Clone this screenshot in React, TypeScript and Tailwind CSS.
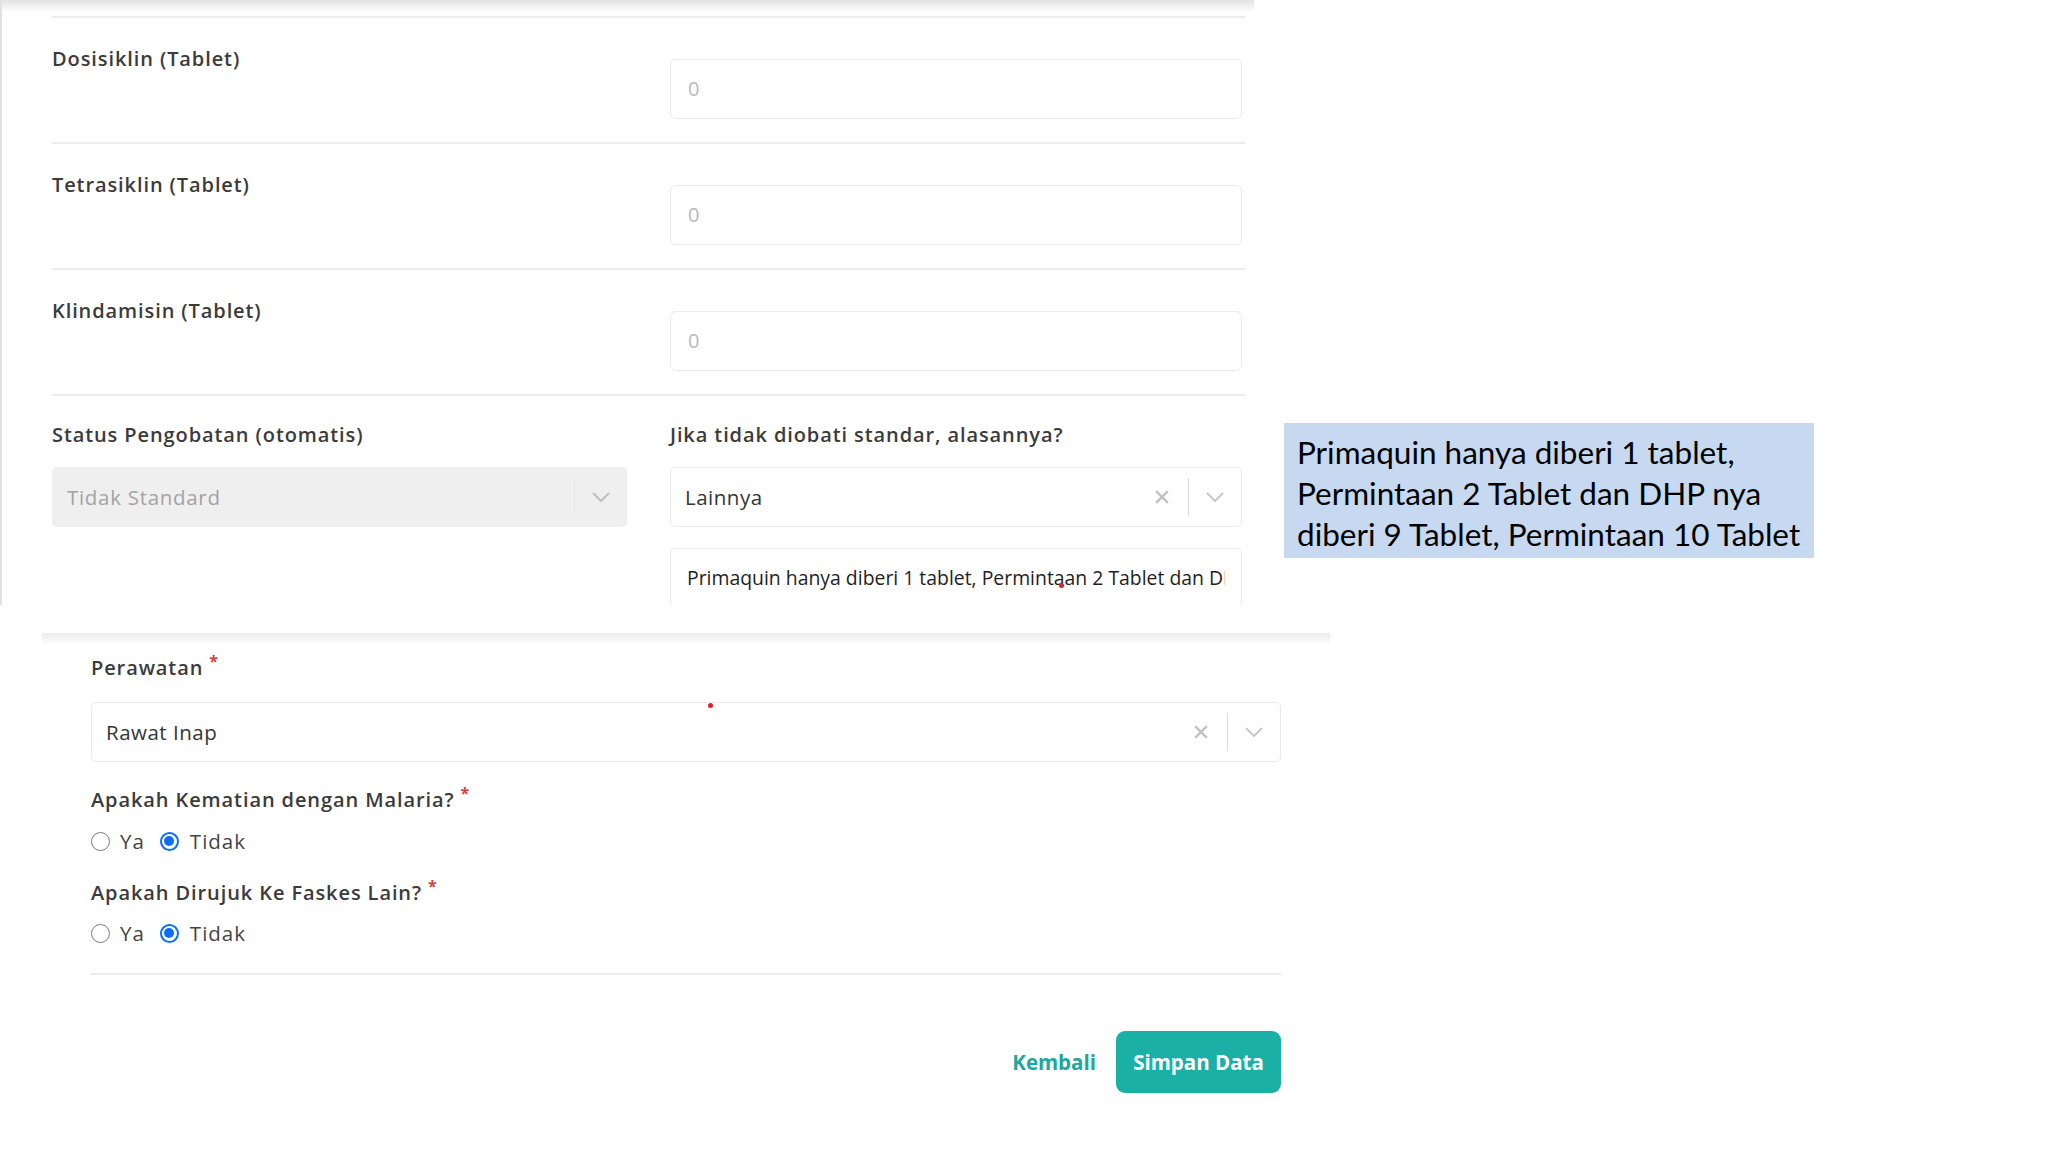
import React from "react";

const sans = "font-['Open_Sans',sans-serif]";

function Chevron({ className = "" }: { className?: string }) {
  return (
    <svg viewBox="0 0 20 20" className={className} fill="none" stroke="currentColor" strokeWidth={1.8} strokeLinecap="round" strokeLinejoin="round">
      <path d="M2.5 6.5l7.5 7.5 7.5-7.5" />
    </svg>
  );
}

function Cross({ className = "" }: { className?: string }) {
  return (
    <svg viewBox="0 0 20 20" className={className} fill="none" stroke="currentColor" strokeWidth={3} strokeLinecap="round">
      <path d="M3.5 3.5l13 13M16.5 3.5l-13 13" />
    </svg>
  );
}

function NumberInput() {
  return (
    <div className="mt-[14px] flex h-[60px] items-center rounded-[6px] border border-[#ebebeb] bg-white pl-[17px] text-[20px] text-[#b9b9b9]">
      0
    </div>
  );
}

function ClearableSelect({ value }: { value: string }) {
  return (
    <div className="flex h-[60px] items-center rounded-[5px] border border-[#ebebeb] bg-white">
      <span className="flex-1 pl-[14px] text-[20.5px] tracking-[0.5px] text-[#353535]">{value}</span>
      <span className="flex w-[52px] justify-center text-[#c2c2c2]">
        <Cross className="h-[16px] w-[16px]" />
      </span>
      <span className="h-[38px] w-px bg-[#d9d9d9]" />
      <span className="flex w-[52px] justify-center text-[#c6c6c6]">
        <Chevron className="h-[20px] w-[20px]" />
      </span>
    </div>
  );
}

function Label({ children, required }: { children: React.ReactNode; required?: boolean }) {
  return (
    <div className="h-[28px] text-[20px] font-semibold leading-[28px] tracking-[0.9px] text-[#3b3b3b]">
      {children}
      {required && <sup className="ml-[6px] text-[16px] font-bold text-[#d43f3a]">*</sup>}
    </div>
  );
}

function TabletRow({ label }: { label: string }) {
  return (
    <div className="grid grid-cols-[575px_572px] gap-x-[43px] border-b-2 border-[#ececec] pt-[27px] pb-[23px]">
      <Label>{label}</Label>
      <NumberInput />
    </div>
  );
}

function Radio({ checked }: { checked?: boolean }) {
  return checked ? (
    <span className="flex h-[19px] w-[19px] items-center justify-center rounded-full border-2 border-[#0b6ef5]">
      <span className="h-[10px] w-[10px] rounded-full bg-[#0b6ef5]" />
    </span>
  ) : (
    <span className="h-[19px] w-[19px] rounded-full border-[1.5px] border-[#7a7a7a]" />
  );
}

function YaTidak() {
  return (
    <div className="flex h-[28px] items-center text-[20.5px] tracking-[1px] text-[#444]">
      <Radio />
      <span className="ml-[10px]">Ya</span>
      <span className="ml-[15px]">
        <Radio checked />
      </span>
      <span className="ml-[11px]">Tidak</span>
    </div>
  );
}

export default function App() {
  return (
    <div className={`${sans} min-h-[1152px] w-[2048px] bg-white`}>
      <div className="flex items-start">
        {/* upper form panel, cropped */}
        <div className="relative h-[605px] w-[1254px] shrink-0 overflow-hidden border-l-2 border-[#e2e2e2]">
          <div className="h-[12px] bg-linear-to-b from-[#e2e2e2] to-white" />
          <div className="ml-[50px] w-[1193px] pt-[4px]">
            <div className="border-t-2 border-[#ececec]" />
            <TabletRow label="Dosisiklin (Tablet)" />
            <TabletRow label="Tetrasiklin (Tablet)" />
            <TabletRow label="Klindamisin (Tablet)" />
            <div className="grid grid-cols-[575px_572px] gap-x-[43px] pt-[25px]">
              <div>
                <Label>Status Pengobatan (otomatis)</Label>
                <div className="mt-[18px] flex h-[60px] items-center rounded-[5px] bg-[#efefef]">
                  <span className="flex-1 pl-[15px] text-[20.5px] tracking-[0.7px] text-[#a3a3a3]">Tidak Standard</span>
                  <span className="h-[36px] w-px bg-[#e6e6e6]" />
                  <span className="flex w-[52px] justify-center text-[#bdbdbd]">
                    <Chevron className="h-[20px] w-[20px]" />
                  </span>
                </div>
              </div>
              <div>
                <Label>Jika tidak diobati standar, alasannya?</Label>
                <div className="mt-[18px]">
                  <ClearableSelect value="Lainnya" />
                </div>
                <div className="relative mt-[21px] flex h-[60px] items-center overflow-hidden rounded-[6px] border border-[#ebebeb] bg-white pl-[16px] pr-[16px]">
                  <span className="overflow-hidden whitespace-nowrap text-[19.4px] text-[#1f1f1f]">
                    Primaquin hanya diberi 1 tablet, Permintaan 2 Tablet dan DHP nya diberi 9 Tablet, Permintaan 10 Tablet
                  </span>
                  <span className="absolute left-[388px] top-[34px] h-[5px] w-[5px] rounded-full bg-[#e0202a]" />
                </div>
              </div>
            </div>
          </div>
        </div>

        {/* annotation */}
        <div className="ml-[30px] mt-[423px] w-[530px] bg-[#c6d9f0] px-[13px] pt-[9px] pb-[3px] font-['Lato',sans-serif] text-[31.5px] leading-[41px] text-black">
          Primaquin hanya diberi 1 tablet, Permintaan 2 Tablet dan DHP nya diberi 9 Tablet, Permintaan 10 Tablet
        </div>
      </div>

      {/* lower form panel */}
      <div className="ml-[42px] mt-[28px] w-[1288px]">
        <div className="h-[12px] bg-linear-to-b from-[#ececec] to-white" />
        <div className="relative px-[49px] pt-[9px]">
          <Label required>Perawatan</Label>
          <span className="absolute left-[666px] top-[58px] h-[5px] w-[5px] rounded-full bg-[#e0202a]" />
          <div className="mt-[20px]">
            <ClearableSelect value="Rawat Inap" />
          </div>
          <div className="mt-[24px]">
            <Label required>Apakah Kematian dengan Malaria?</Label>
          </div>
          <div className="mt-[13px]">
            <YaTidak />
          </div>
          <div className="mt-[24px]">
            <Label required>Apakah Dirujuk Ke Faskes Lain?</Label>
          </div>
          <div className="mt-[12px]">
            <YaTidak />
          </div>
          <div className="mt-[26px] border-t-2 border-[#ececec]" />
          <div className="mt-[56px] flex items-center justify-end">
            <button className="mr-[20px] text-[20.5px] font-bold text-[#1da89d]">Kembali</button>
            <button className="h-[62px] w-[165px] rounded-[9px] bg-[#1bb0a6] text-[20.5px] font-bold text-white">
              Simpan Data
            </button>
          </div>
        </div>
      </div>
    </div>
  );
}
